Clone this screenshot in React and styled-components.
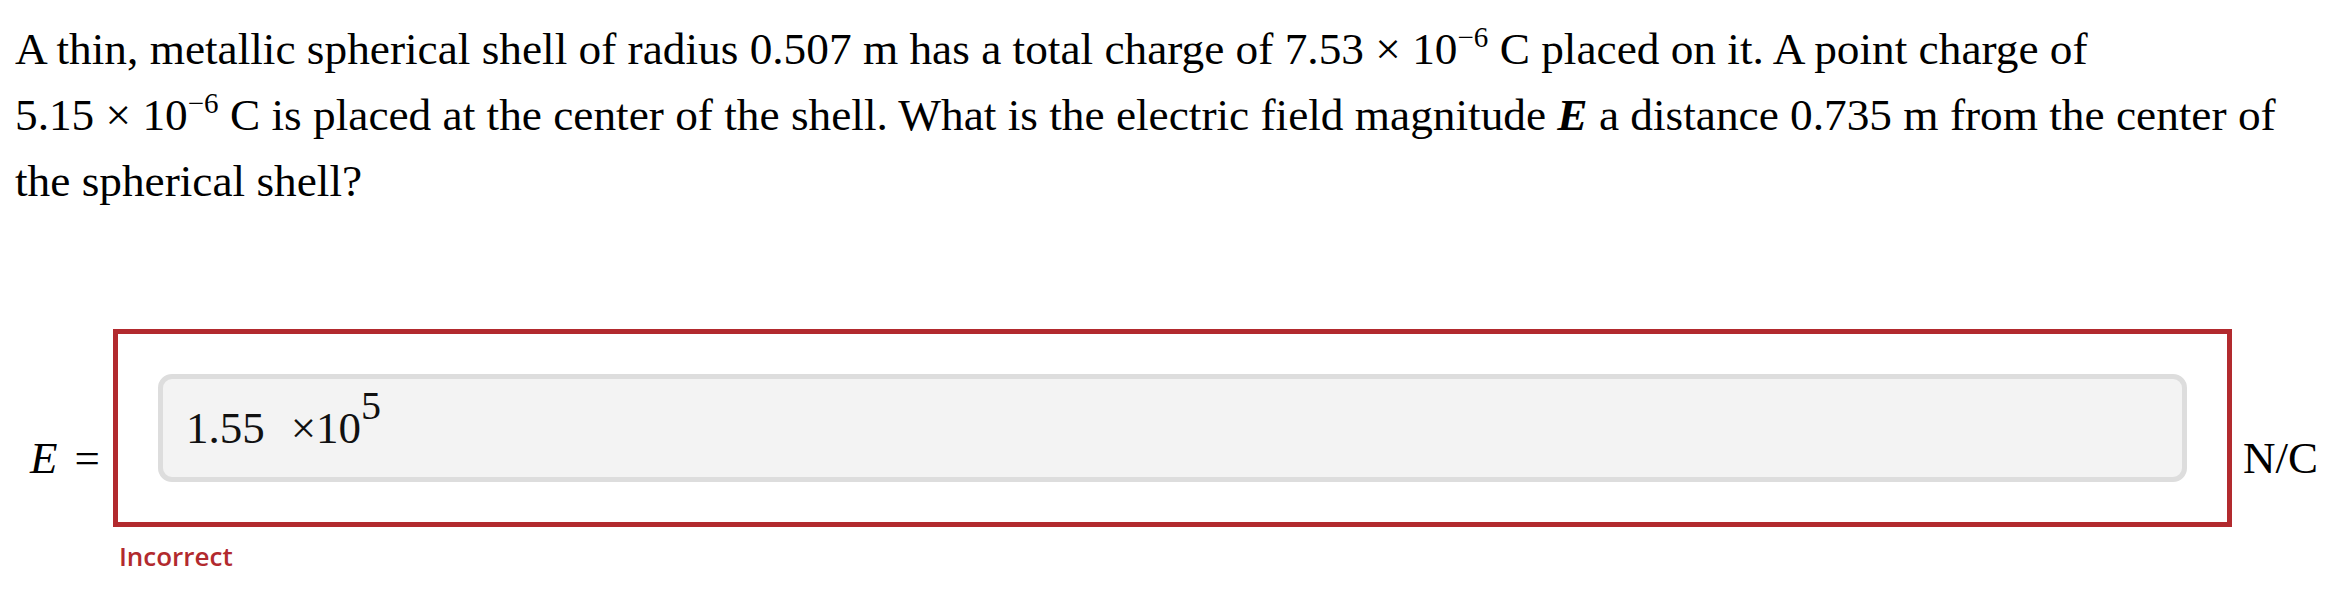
import React from 'react';
import styled, { createGlobalStyle } from 'styled-components';

const GlobalStyle = createGlobalStyle`
  html, body {
    margin: 0;
    padding: 0;
    background: #ffffff;
  }
  body {
    font-family: "Liberation Serif", "Times New Roman", serif;
    color: #000000;
  }
`;

const Page = styled.div`
  padding: 16px 19px 0 15px;
`;

const Question = styled.p`
  margin: 0;
  font-size: 45.3px;
  line-height: 66px;
`;

// math expressions (number + unit) never break across lines
const Quantity = styled.span`
  white-space: nowrap;
`;

const Sup = styled.sup`
  font-size: 29px;
  line-height: 0;
  vertical-align: 17px;
`;

const Var = styled.i`
  font-weight: bold;
`;

const AnswerRow = styled.div`
  display: flex;
  align-items: flex-start;
  margin-top: 115px;
  padding-left: 15px;
`;

const Label = styled.div`
  display: flex;
  flex-shrink: 0;
  margin-top: 96px;
  font-size: 45px;
  line-height: 66px;
  white-space: nowrap;
`;

const MathVar = styled.i`
  margin-right: 17px;
`;

const AnswerColumn = styled.div`
  flex: 1;
  display: flex;
  flex-direction: column;
  margin: 0 11px 0 13px;
`;

const ResultBox = styled.div`
  border: 5px solid #b22a2e;
  padding: 40px;
`;

const InputField = styled.div`
  display: flex;
  align-items: center;
  height: 98px;
  padding-left: 23px;
  background: #f3f3f3;
  border: 5px solid #dddddd;
  border-radius: 14px;
  font-size: 45px;
  line-height: 66px;
  color: #111111;
`;

const Exponent = styled.span`
  margin-left: 26px;
`;

const ExpSup = styled.sup`
  font-size: 40px;
  line-height: 0;
  vertical-align: 24px;
`;

const Feedback = styled.div`
  margin-top: 13px;
  padding-left: 6px;
  font-family: "Open Sans", "Noto Sans", sans-serif;
  font-weight: 600;
  font-size: 26px;
  line-height: 32px;
  color: #b22a2e;
`;

const Unit = styled(Label)``;

export default function App() {
  return (
    <>
      <GlobalStyle />
      <Page>
        <Question>
          A thin, metallic spherical shell of radius <Quantity>0.507 m</Quantity> has a total
          charge of{' '}
          <Quantity>
            7.53 × 10<Sup>−6</Sup> C
          </Quantity>{' '}
          placed on it. A point charge of{' '}
          <Quantity>
            5.15 × 10<Sup>−6</Sup> C
          </Quantity>{' '}
          is placed at the center of the shell. What is the electric field magnitude{' '}
          <Var>E</Var> a distance <Quantity>0.735 m</Quantity> from the center of the spherical
          shell?
        </Question>

        <AnswerRow>
          <Label>
            <MathVar>E</MathVar>=
          </Label>
          <AnswerColumn>
            <ResultBox>
              <InputField>
                1.55
                <Exponent>
                  ×10<ExpSup>5</ExpSup>
                </Exponent>
              </InputField>
            </ResultBox>
            <Feedback>Incorrect</Feedback>
          </AnswerColumn>
          <Unit>N/C</Unit>
        </AnswerRow>
      </Page>
    </>
  );
}
